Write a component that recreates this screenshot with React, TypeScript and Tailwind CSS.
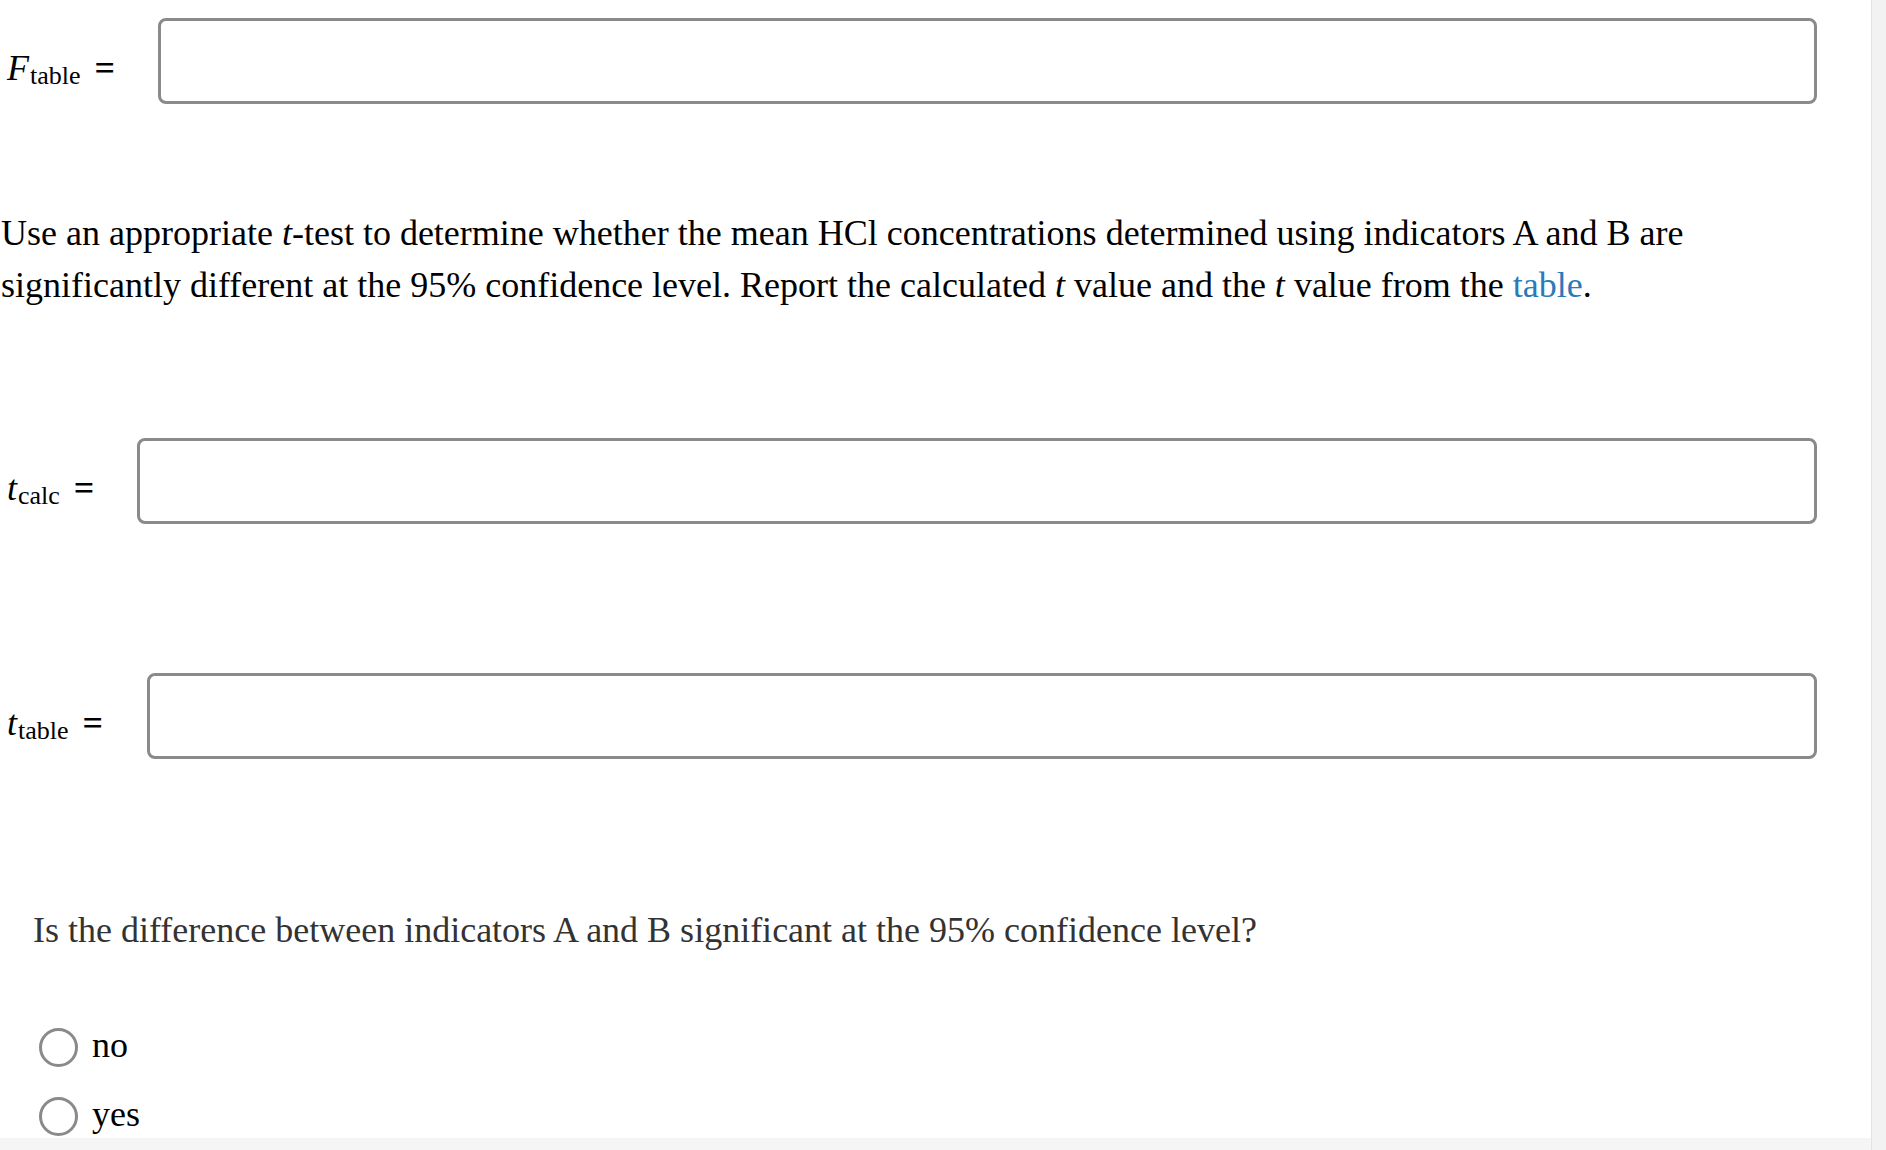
const serif = "font-['Liberation_Serif','Times_New_Roman',serif]";

function AnswerRow({ sym, sub, labelWidth }: { sym: string; sub: string; labelWidth: string }) {
  return (
    <div className="flex items-start">
      <div className={`${labelWidth} shrink-0 h-[86px] pt-[32px] pl-[7px]`}>
        <div className="flex items-baseline text-[36px] leading-none text-black">
          <i>{sym}</i>
          <span className="relative top-[4px] ml-[1px] text-[26px]">{sub}</span>
          <span className="ml-[14px] font-bold">=</span>
        </div>
      </div>
      <div className="flex-1 h-[86px] rounded-[8px] border-[3px] border-[#8a8a8a] bg-white" />
    </div>
  );
}

function Radio({ label }: { label: string }) {
  return (
    <label className="flex h-[69px] items-center pl-[39px]">
      <span className="h-[39px] w-[39px] shrink-0 rounded-full border-[3px] border-[#8a8a8a] bg-white" />
      <span className="-mt-[6px] ml-[14px] text-[36px] leading-none text-black">{label}</span>
    </label>
  );
}

export default function App() {
  return (
    <div className={`${serif} flex h-[1150px] w-[1886px] overflow-hidden bg-white`}>
      <div className="flex flex-1 flex-col">
        <div className="h-[1138px] overflow-hidden pr-[54px] pt-[18px]">
          <AnswerRow sym="F" sub="table" labelWidth="w-[158px]" />

          <p className="mt-[103px] pl-[1px] text-[36px] leading-[52px] text-black">
            Use an appropriate <i>t</i>-test to determine whether the mean HCl concentrations determined using
            indicators A and B are significantly different at the 95% confidence level. Report the calculated{" "}
            <i>t</i> value and the <i>t</i> value from the <span className="text-[#2a7ab9]">table</span>.
          </p>

          <div className="mt-[127px]">
            <AnswerRow sym="t" sub="calc" labelWidth="w-[137px]" />
          </div>
          <div className="mt-[149px]">
            <AnswerRow sym="t" sub="table" labelWidth="w-[147px]" />
          </div>

          <p className="mt-[145px] pl-[33px] text-[36px] leading-[52px] text-[#333333]">
            Is the difference between indicators A and B significant at the 95% confidence level?
          </p>

          <div className="mt-[57px]">
            <Radio label="no" />
            <Radio label="yes" />
          </div>
        </div>
        <div className="h-[12px] bg-[#f5f5f5]" />
      </div>
      <div className="w-[15px] border-l border-[#e3e3e3] bg-[#f2f2f2]" />
    </div>
  );
}
